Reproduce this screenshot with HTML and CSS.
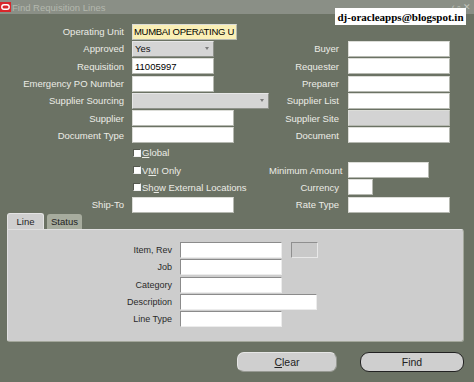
FILE: index.html
```html
<!DOCTYPE html>
<html lang="en">
<head>
  <meta charset="UTF-8">
  <title>Find Requisition Lines</title>
  <link rel="stylesheet" href="styles.css">
</head>
<body>
  <!-- window title bar -->
  <div class="titlebar">
    <svg class="logo" width="11" height="10" viewBox="0 0 11 10">
      <rect width="11" height="10" fill="#d8262a"/>
      <rect x="1.8" y="2.8" width="7.4" height="4.4" rx="2.2" fill="none" stroke="#fff" stroke-width="1.4"/>
    </svg>
    <span class="title">Find Requisition Lines</span>
    <span class="controls">&lsaquo; &#9643; &#10005;</span>
  </div>
  <div class="watermark">dj-oracleapps@blogspot.in</div>

  <!-- header search criteria -->
  <div class="search">
    <label class="lbl">Operating Unit</label>
    <div class="fld req w105"><span>MUMBAI OPERATING U</span></div>
    <span></span><span></span>

    <label class="lbl">Approved</label>
    <div class="fld combo w82"><span>Yes</span><i class="arrow"></i></div>
    <label class="lbl">Buyer</label>
    <input class="fld r w102" type="text">

    <label class="lbl">Requisition</label>
    <input class="fld w82" type="text" value="11005997">
    <label class="lbl">Requester</label>
    <input class="fld r w102" type="text">

    <label class="lbl">Emergency PO Number</label>
    <input class="fld w82" type="text">
    <label class="lbl">Preparer</label>
    <input class="fld r w102" type="text">

    <label class="lbl">Supplier Sourcing</label>
    <div class="fld combo w137"><span></span><i class="arrow"></i></div>
    <label class="lbl">Supplier List</label>
    <input class="fld r w102" type="text">

    <label class="lbl">Supplier</label>
    <input class="fld w102" type="text">
    <label class="lbl">Supplier Site</label>
    <input class="fld r w102 off" type="text">

    <label class="lbl">Document Type</label>
    <input class="fld w102" type="text">
    <label class="lbl">Document</label>
    <input class="fld r w102" type="text">

    <span></span>
    <div class="chk"><i class="box"></i><u>G</u>lobal</div>
    <span></span><span></span>

    <span></span>
    <div class="chk"><i class="box"></i>V<u>M</u>I Only</div>
    <label class="lbl">Minimum Amount</label>
    <input class="fld r w81" type="text">

    <span></span>
    <div class="chk"><i class="box"></i>Sh<u>o</u>w External Locations</div>
    <label class="lbl">Currency</label>
    <input class="fld r w25" type="text">

    <label class="lbl">Ship-To</label>
    <input class="fld w102" type="text">
    <label class="lbl">Rate Type</label>
    <input class="fld r w102" type="text">
  </div>

  <!-- tabbed region -->
  <div class="tabs">
    <div class="tabbar">
      <div class="tab on">Line</div>
      <div class="tab">Status</div>
    </div>
    <div class="panel">
      <label class="plbl">Item, Rev</label>
      <div class="prow">
        <input class="pfld w102" type="text">
        <span class="rev"></span>
      </div>
      <label class="plbl">Job</label>
      <input class="pfld w102" type="text">
      <label class="plbl">Category</label>
      <input class="pfld w102" type="text">
      <label class="plbl">Description</label>
      <input class="pfld w137" type="text">
      <label class="plbl">Line Type</label>
      <input class="pfld w102" type="text">
    </div>
  </div>

  <div class="buttons">
    <button class="btn clear"><u>C</u>lear</button>
    <button class="btn find">Find</button>
  </div>
</body>
</html>
```

FILE: styles.css
```css
/* Reset */
* { box-sizing: border-box; margin: 0; padding: 0; }
html, body {
  width: 474px; height: 382px;
  overflow: hidden;
}
body {
  position: relative;
  background: #6b7264;          /* oracle forms olive */
  font-family: "Liberation Sans", Arial, sans-serif;
  font-size: 9.5px;
  color: #ecece6;
}

/* Title bar */
.titlebar {
  height: 14px;
  display: flex;
  align-items: center;
  background: #8a8f86;
  color: #b4b8ae;
}
.titlebar .logo { margin: 0 1px 0 0; flex: none; }
.titlebar .title { flex: 1; }
.titlebar .controls {
  color: #c3c6be;
  font-size: 9px;
  margin-right: 3px;
}

/* blog watermark stamped over the window */
.watermark {
  position: absolute;
  left: 335px; top: 8px;
  width: 131px; height: 17px;
  background: #fff;
  color: #000;
  font: bold 11px "Liberation Serif", serif;
  display: flex;
  align-items: center;
  justify-content: center;
}

/* Search criteria grid */
.search {
  display: grid;
  grid-template-columns: 124px 145px 70px 111px;
  grid-auto-rows: 17.3px;
  align-items: center;
  margin-top: 9px;
}
.lbl {
  text-align: right;
  white-space: nowrap;
}
.fld {
  height: 16px;
  margin-left: 8px;
  padding: 0 2px;
  font: inherit;
  color: #000;
  background: #fff;
  border: 1px solid;
  border-color: #dcddd8 #b6b9b1 #b6b9b1 #dcddd8;
  outline: none;
  display: flex;
  align-items: center;
  overflow: hidden;
  white-space: nowrap;
}
.fld.r { margin-left: 9px; }
.fld.off { background: #d3d3d3; }
.fld.req {
  background: #faefb6;          /* required field yellow */
  padding: 0 1px;
  letter-spacing: -0.3px;
}
.combo {
  background: #d5d5d5;
  border-color: #e6e6e6 #8e918a #8e918a #e6e6e6;
  justify-content: space-between;
  color: #111;
}
.arrow {
  width: 0; height: 0;
  border-left: 2.5px solid transparent;
  border-right: 2.5px solid transparent;
  border-top: 3px solid #7c7c7c;
  margin-right: 2px;
}

.w25 { width: 25px; }
.w81 { width: 81px; }
.w82 { width: 82px; }
.w102 { width: 102px; }
.w105 { width: 105px; }
.w137 { width: 137px; }

/* Check boxes */
.chk {
  display: flex;
  align-items: center;
  margin-left: 9px;
  white-space: nowrap;
}
.box {
  width: 8px; height: 8px;
  margin-right: 1px;
  background: #fff;
  border: 1px solid;
  border-color: #55594f #f2f2f2 #f2f2f2 #55594f;
}

/* Tabs */
.tabs { margin: 0 10px 0 7px; }
.tabbar {
  display: flex;
  align-items: flex-end;
  gap: 3px;
  height: 16px;
}
.tab {
  width: 35px; height: 15px;
  display: flex;
  align-items: center;
  justify-content: center;
  background: #a7ac9e;
  color: #1f1f1f;
  border-radius: 3px 3px 0 0;
}
.tab.on {
  width: 37px; height: 16px;
  background: #cfcfcf;
  border: 1px solid #e4e4e4;
  border-bottom: none;
}
.panel {
  height: 113px;
  display: grid;
  grid-template-columns: 164px auto;
  grid-auto-rows: 17.3px;
  align-items: center;
  align-content: start;
  padding-top: 11px;
  background: #cdcdcd;
  border: 1px solid;
  border-color: #e0e0e0 #a3a79b #a3a79b #e0e0e0;
  border-radius: 0 3px 3px 3px;
}
.plbl {
  text-align: right;
  font-size: 9px;
  color: #2a2a2a;
  white-space: nowrap;
}
.pfld {
  height: 16px;
  margin-left: 8px;
  background: #fff;
  border: 1px solid;
  border-color: #8b8b8b #ececec #ececec #8b8b8b;
  outline: none;
}
.prow { display: flex; align-items: center; }
.prow .rev {
  width: 27px; height: 16px;
  margin-left: 9px;
  background: #c9c9c9;
  border: 1px solid;
  border-color: #8f8f8f #e8e8e8 #e8e8e8 #8f8f8f;
}

/* Buttons */
.buttons {
  display: flex;
  justify-content: flex-end;
  gap: 23px;
  margin: 10px 10px 0 0;
}
.btn {
  height: 20px;
  font-family: inherit;
  font-size: 10.5px;
  color: #222;
  background: #cfcfcf;
  border: 1px solid;
  border-radius: 7px;
  cursor: pointer;
}
.btn.clear {
  width: 100px;
  border-color: #e6e6e6 #979a93 #979a93 #e6e6e6;
}
.btn.find {
  width: 104px;
  border-color: #222;
  border-radius: 9px;
}
```
